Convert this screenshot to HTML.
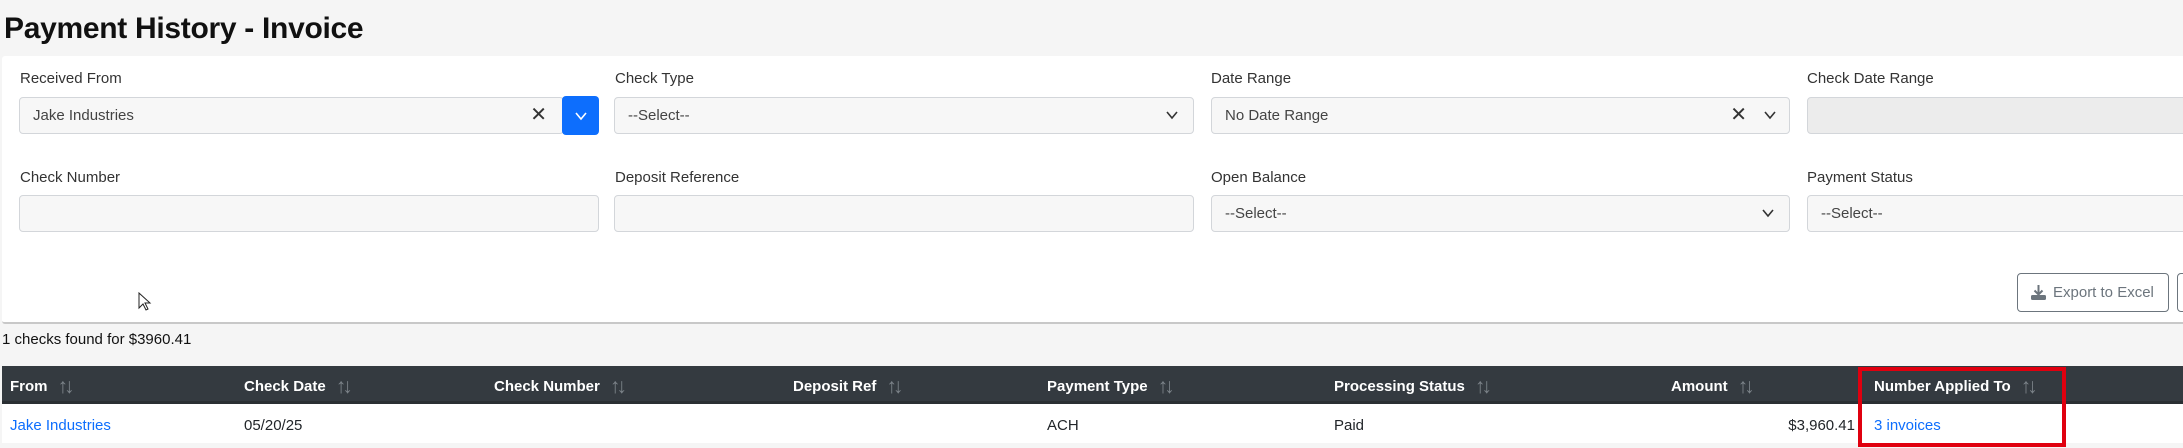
<!DOCTYPE html>
<html><head><meta charset="utf-8"><style>
*{box-sizing:border-box;margin:0;padding:0}
body{width:2183px;height:448px;background:#f5f5f5;font-family:"Liberation Sans",sans-serif;color:#212529;position:relative;overflow:hidden;font-size:15px}
.a{position:absolute;white-space:nowrap}
h1{position:absolute;left:4px;top:12px;font-size:30px;font-weight:bold;color:#111;letter-spacing:-0.3px}
.card{position:absolute;left:2px;top:56px;width:2200px;height:268px;background:#fff;border-bottom:2px solid #c8c8c8;border-radius:3px}
.lbl{position:absolute;font-size:15px;color:#333}
.inp{position:absolute;height:37px;background:#f7f7f7;border:1px solid #d3d6da;border-radius:4px;font-size:15px;color:#444;padding-left:13px;line-height:35px}
.chev{position:absolute;top:10px;width:14px;height:14px}
.th{position:absolute;top:376px;color:#fff;font-weight:bold;font-size:15px;line-height:18px}
.so{color:#7b8288;font-weight:normal;margin-left:10px;letter-spacing:-4px;font-size:21px;line-height:1;vertical-align:-2px}
.td{position:absolute;top:417px;font-size:15px}
</style></head><body>
<h1>Payment History - Invoice</h1>
<div class="card"></div>
<div class="lbl" style="left:20px;top:70px">Received From</div>
<div class="lbl" style="left:615px;top:70px">Check Type</div>
<div class="lbl" style="left:1211px;top:70px">Date Range</div>
<div class="lbl" style="left:1807px;top:70px">Check Date Range</div>
<div class="inp" style="left:19px;top:97px;width:545px">Jake Industries<span class="a" style="right:16px;top:0;font-size:20px;color:#333">✕</span></div>
<div class="a" style="left:562px;top:96px;width:37px;height:39px;background:#0d6efd;border-radius:4px"><svg class="chev" style="left:12px;top:13px" viewBox="0 0 14 14"><path d="M2 4l5 6 5-6" fill="none" stroke="#fff" stroke-width="1.6"/></svg></div>
<div class="inp" style="left:614px;top:97px;width:580px">--Select--<svg class="chev" style="right:14px" viewBox="0 0 14 14"><path d="M2 4l5 6 5-6" fill="none" stroke="#333" stroke-width="1.6"/></svg></div>
<div class="inp" style="left:1211px;top:97px;width:579px">No Date Range<span class="a" style="right:42px;top:0;font-size:20px;color:#333">✕</span><svg class="chev" style="right:12px" viewBox="0 0 14 14"><path d="M2 4l5 6 5-6" fill="none" stroke="#333" stroke-width="1.6"/></svg></div>
<div class="inp" style="left:1807px;top:97px;width:400px;background:#ececec"></div>
<div class="lbl" style="left:20px;top:169px">Check Number</div>
<div class="lbl" style="left:615px;top:169px">Deposit Reference</div>
<div class="lbl" style="left:1211px;top:169px">Open Balance</div>
<div class="lbl" style="left:1807px;top:169px">Payment Status</div>
<div class="inp" style="left:19px;top:195px;width:580px"></div>
<div class="inp" style="left:614px;top:195px;width:580px"></div>
<div class="inp" style="left:1211px;top:195px;width:579px">--Select--<svg class="chev" style="right:14px" viewBox="0 0 14 14"><path d="M2 4l5 6 5-6" fill="none" stroke="#333" stroke-width="1.6"/></svg></div>
<div class="inp" style="left:1807px;top:195px;width:400px">--Select--</div>
<svg class="a" style="left:138px;top:292px" width="14" height="20" viewBox="0 0 14 20"><path d="M1 1v15l4-4 3 6 2-1-3-6h5z" fill="#fff" stroke="#222" stroke-width="1"/></svg>
<div class="a" style="left:2017px;top:273px;width:152px;height:39px;border:1px solid #6c757d;border-radius:4px;color:#6c757d;font-size:15px;line-height:37px;padding-left:35px">Export to Excel<svg class="a" style="left:12px;top:10px" width="17" height="17" viewBox="0 0 17 17"><path d="M8.5 1v9M4.5 6.5l4 4 4-4" fill="none" stroke="#6c757d" stroke-width="2"/><rect x="1" y="11" width="15" height="5" rx="1.5" fill="#6c757d"/></svg></div>
<div class="a" style="left:2177px;top:273px;width:20px;height:39px;border:1px solid #6c757d;border-radius:4px"></div>
<div class="a" style="left:2px;top:331px;font-size:15px;color:#111">1 checks found for $3960.41</div>
<div class="a" style="left:2px;top:366px;width:2200px;height:38px;background:#343a40;border-bottom:3px solid #2a2f33"></div>
<div class="a" style="left:2px;top:404px;width:2200px;height:39px;background:#fff"></div>
<div class="th" style="left:10px">From<span class="so">↑↓</span></div>
<div class="th" style="left:244px">Check Date<span class="so">↑↓</span></div>
<div class="th" style="left:494px">Check Number<span class="so">↑↓</span></div>
<div class="th" style="left:793px">Deposit Ref<span class="so">↑↓</span></div>
<div class="th" style="left:1047px">Payment Type<span class="so">↑↓</span></div>
<div class="th" style="left:1334px">Processing Status<span class="so">↑↓</span></div>
<div class="th" style="left:1671px">Amount<span class="so">↑↓</span></div>
<div class="th" style="left:1874px">Number Applied To<span class="so">↑↓</span></div>
<div class="td" style="left:10px;color:#0d6efd">Jake Industries</div>
<div class="td" style="left:244px">05/20/25</div>
<div class="td" style="left:1047px">ACH</div>
<div class="td" style="left:1334px">Paid</div>
<div class="td" style="right:328px">$3,960.41</div>
<div class="td" style="left:1874px;color:#0d6efd">3 invoices</div>
<div class="a" style="left:1858px;top:367px;width:208px;height:80px;border:4px solid #e0000f"></div>
</body></html>
